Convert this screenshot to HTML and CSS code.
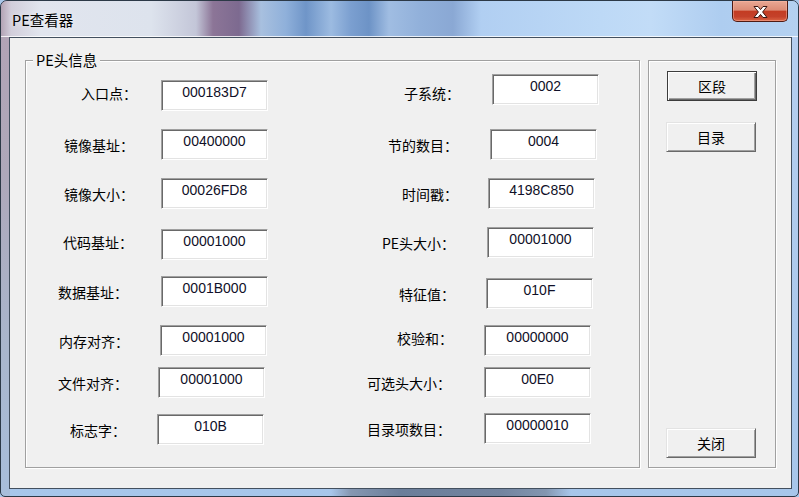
FILE: index.html
```html
<!DOCTYPE html>
<html lang="zh-CN">
<head>
<meta charset="utf-8">
<title>PE查看器</title>
<link rel="stylesheet" href="styles.css">
</head>
<body>
<div class="window">
  <div class="titlebar">
    <span class="title">PE查看器</span>
    <div class="close-btn">
      <svg width="15" height="12" viewBox="0 0 15 12"><polygon points="1,0.5 5,0.5 7.5,3.6 10,0.5 14,0.5 9.6,6 14,11.5 10,11.5 7.5,8.4 5,11.5 1,11.5 5.4,6" fill="#fff" stroke="#3b1610" stroke-width="1" stroke-linejoin="round"/></svg>
    </div>
  </div>
  <div class="client">
    <div class="group info">
      <span class="group-title">PE头信息</span>
      <div class="col col-left">
        <div class="field"><span class="lbl">入口点<span class="colon">：</span></span><div class="edit">000183D7</div></div>
        <div class="field"><span class="lbl">镜像基址<span class="colon">：</span></span><div class="edit">00400000</div></div>
        <div class="field"><span class="lbl">镜像大小<span class="colon">：</span></span><div class="edit">00026FD8</div></div>
        <div class="field"><span class="lbl">代码基址<span class="colon">：</span></span><div class="edit">00001000</div></div>
        <div class="field"><span class="lbl">数据基址<span class="colon">：</span></span><div class="edit">0001B000</div></div>
        <div class="field"><span class="lbl">内存对齐<span class="colon">：</span></span><div class="edit">00001000</div></div>
        <div class="field"><span class="lbl">文件对齐<span class="colon">：</span></span><div class="edit">00001000</div></div>
        <div class="field"><span class="lbl">标志字<span class="colon">：</span></span><div class="edit">010B</div></div>
      </div>
      <div class="col col-right">
        <div class="field"><span class="lbl">子系统<span class="colon">：</span></span><div class="edit">0002</div></div>
        <div class="field"><span class="lbl">节的数目<span class="colon">：</span></span><div class="edit">0004</div></div>
        <div class="field"><span class="lbl">时间戳<span class="colon">：</span></span><div class="edit">4198C850</div></div>
        <div class="field"><span class="lbl">PE头大小<span class="colon">：</span></span><div class="edit">00001000</div></div>
        <div class="field"><span class="lbl">特征值<span class="colon">：</span></span><div class="edit">010F</div></div>
        <div class="field"><span class="lbl">校验和<span class="colon">：</span></span><div class="edit">00000000</div></div>
        <div class="field"><span class="lbl">可选头大小<span class="colon">：</span></span><div class="edit">00E0</div></div>
        <div class="field"><span class="lbl">目录项数目<span class="colon">：</span></span><div class="edit">00000010</div></div>
      </div>
    </div>
    <div class="group actions">
      <button class="btn default">区段</button>
      <button class="btn dir">目录</button>
      <button class="btn close">关闭</button>
    </div>
  </div>
</div>
</body>
</html>
```
FILE: styles.css
```css
html, body {
  margin: 0;
  padding: 0;
}
body {
  width: 799px;
  height: 497px;
  overflow: hidden;
  font-family: "Noto Sans CJK SC", sans-serif;
  background: #a9c7ea;
}
.window {
  box-sizing: border-box;
  width: 799px;
  height: 497px;
  border: 1px solid #2c3947;
  border-radius: 7px 7px 5px 5px;
  overflow: hidden;
  display: flex;
  flex-direction: column;
  background:
    linear-gradient(to bottom, #b2a2b4 0, #aea8ba 35%, #a9b6cc 70%, #a8bedb 100%) left top / 9px 100% no-repeat,
    linear-gradient(to right, rgba(0,0,0,0) 330px, #8597b1 350px, #6b7e9a 400px, #72849f 500px, #8396b0 545px, rgba(0,0,0,0) 570px) left bottom / 100% 9px no-repeat,
    linear-gradient(to bottom, #b6cff0, #a7c6ea);
}
.titlebar {
  height: 36px;
  flex: none;
  display: flex;
  align-items: flex-start;
  justify-content: space-between;
  border-bottom: 0;
  background: linear-gradient(to right,
    #b3a3b5 0, #d2cedb 10px, #e1e5ee 40px, #dde3ed 150px, #c3c6d8 195px,
    #8c7597 212px, #7d6a90 238px, #a8c0df 260px, #8fb0da 285px, #6f95c8 305px,
    #9cbbe1 330px, #7b9fd0 350px, #6d93c6 368px, #a0bde2 388px, #91b0da 420px,
    #8aa8d4 452px, #b1cff2 480px, #bdd9f6 600px, #c2dcf7 650px, #aecdf0 720px, #b4d1f0 799px);
  box-shadow: inset 0 -1px 0 rgba(255,255,255,0.8);
}
.title {
  margin: 9px 0 0 11px;
  font-size: 14.5px;
  line-height: 20px;
  color: #000;
  text-shadow: 0 0 6px rgba(255,255,255,0.7);
}
.close-btn {
  box-sizing: border-box;
  width: 56px;
  height: 21px;
  margin-right: 10px;
  border: 1px solid #4f1a12;
  border-top: 0;
  border-radius: 0 0 5px 5px;
  background: linear-gradient(to bottom, #e9a894 0%, #dc8c76 45%, #c33c23 52%, #c4412a 78%, #da6444 100%);
  box-shadow: inset 0 0 0 1px rgba(255,190,170,0.45);
  display: flex;
  align-items: center;
  justify-content: center;
}
.close-btn svg {
  display: block;
  margin-top: 1px;
}
.client {
  flex: 1;
  margin: 0 6px 7px 8px;
  border: 1px solid #43505f;
  background: #f0f0f0;
  display: flex;
  align-items: flex-start;
  gap: 8px;
  padding: 22px 0 0 15px;
}
.group {
  position: relative;
  box-sizing: border-box;
  height: 408px;
  border: 1px solid #a0a0a0;
  box-shadow: inset 1px 1px 0 #fff, 1px 1px 0 #fff;
}
.group-title {
  position: absolute;
  top: -9px;
  left: 7px;
  padding: 0 3px;
  background: #f0f0f0;
  font-size: 14.5px;
  line-height: 16px;
  color: #000;
}
.info {
  width: 615px;
  display: flex;
}
.col {
  display: grid;
  align-content: start;
}
.col-left {
  width: 314px;
  flex: none;
  padding-top: 19px;
  grid-template-rows: 49px 49px 51px 47px 49px 42px 47px 31px;
}
.col-right {
  flex: 1;
  padding-top: 13px;
  grid-template-rows: 55px 49px 49px 51px 47px 42px 46px 31px;
}
.field {
  display: flex;
  align-items: center;
  height: 31px;
}
.lbl {
  flex: none;
  width: 100px;
  text-align: right;
  white-space: nowrap;
  font-size: 14px;
  line-height: 16px;
  color: #000;
}
.colon {
  font-family: "Noto Sans CJK TC", sans-serif;
}
.edit {
  box-sizing: border-box;
  flex: none;
  width: 107px;
  height: 31px;
  padding-top: 3px;
  background: #fff;
  border: 1px solid;
  border-color: #a0a0a0 #fff #fff #a0a0a0;
  box-shadow: inset 1px 1px 0 #696969, inset -1px -1px 0 #e3e3e3;
  font-family: "Liberation Sans", Arial, sans-serif;
  font-size: 14px;
  line-height: 16px;
  text-align: center;
  color: #101028;
}

/* left column placement */
.col-left .field:nth-child(1) { margin-left: 11px; }
.col-left .field:nth-child(1) .lbl { margin-right: 24px; margin-bottom: 5px; }
.col-left .field:nth-child(2) { margin-left: 8px; }
.col-left .field:nth-child(2) .lbl { margin-right: 27px; }
.col-left .field:nth-child(3) { margin-left: 8px; }
.col-left .field:nth-child(3) .lbl { margin-right: 27px; }
.col-left .field:nth-child(4) { margin-left: 7px; }
.col-left .field:nth-child(4) .lbl { margin-right: 28px; margin-bottom: 5px; }
.col-left .field:nth-child(5) { margin-left: 2px; }
.col-left .field:nth-child(5) .lbl { margin-right: 33px; }
.col-left .field:nth-child(6) { margin-left: 3px; }
.col-left .field:nth-child(6) .lbl { margin-right: 31px; }
.col-left .field:nth-child(7) { margin-left: 2px; }
.col-left .field:nth-child(7) .lbl { margin-right: 30px; }
.col-left .field:nth-child(8) { margin-left: 0; }
.col-left .field:nth-child(8) .lbl { margin-right: 31px; }

/* right column placement */
.col-right .field:nth-child(1) { margin-left: 20px; }
.col-right .field:nth-child(1) .lbl { margin-right: 32px; margin-top: 6px; }
.col-right .field:nth-child(2) { margin-left: 18px; }
.col-right .field:nth-child(2) .lbl { margin-right: 32px; }
.col-right .field:nth-child(3) { margin-left: 18px; }
.col-right .field:nth-child(3) .lbl { margin-right: 30px; }
.col-right .field:nth-child(4) { margin-left: 15px; }
.col-right .field:nth-child(4) .lbl { margin-right: 32px; }
.col-right .field:nth-child(5) { margin-left: 15px; }
.col-right .field:nth-child(5) .lbl { margin-right: 31px; }
.col-right .field:nth-child(6) { margin-left: 13px; }
.col-right .field:nth-child(6) .lbl { margin-right: 31px; margin-bottom: 5px; }
.col-right .field:nth-child(7) { margin-left: 11px; }
.col-right .field:nth-child(7) .lbl { margin-right: 33px; }
.col-right .field:nth-child(8) { margin-left: 11px; }
.col-right .field:nth-child(8) .lbl { margin-right: 33px; }

.actions {
  width: 128px;
  display: flex;
  flex-direction: column;
  align-items: flex-start;
  padding: 10px 0 9px 17px;
}
.btn {
  box-sizing: border-box;
  width: 90px;
  height: 30px;
  padding: 0;
  margin: 0;
  background: #f0f0f0;
  color: #000;
  font-family: "Noto Sans CJK SC", sans-serif;
  font-size: 14px;
  line-height: 16px;
  border: 1px solid;
  border-color: #e3e3e3 #696969 #696969 #e3e3e3;
  box-shadow: inset 1px 1px 0 #fff, inset -1px -1px 0 #a0a0a0;
}
.btn.default {
  margin-left: 1px;
  border: 1px solid #3c3c3c;
  box-shadow: inset 1px 1px 0 #fff, inset -1px -1px 0 #696969, inset -2px -2px 0 #a0a0a0;
}
.btn.dir {
  margin-top: 21px;
}
.btn.close {
  margin-top: auto;
}
```
